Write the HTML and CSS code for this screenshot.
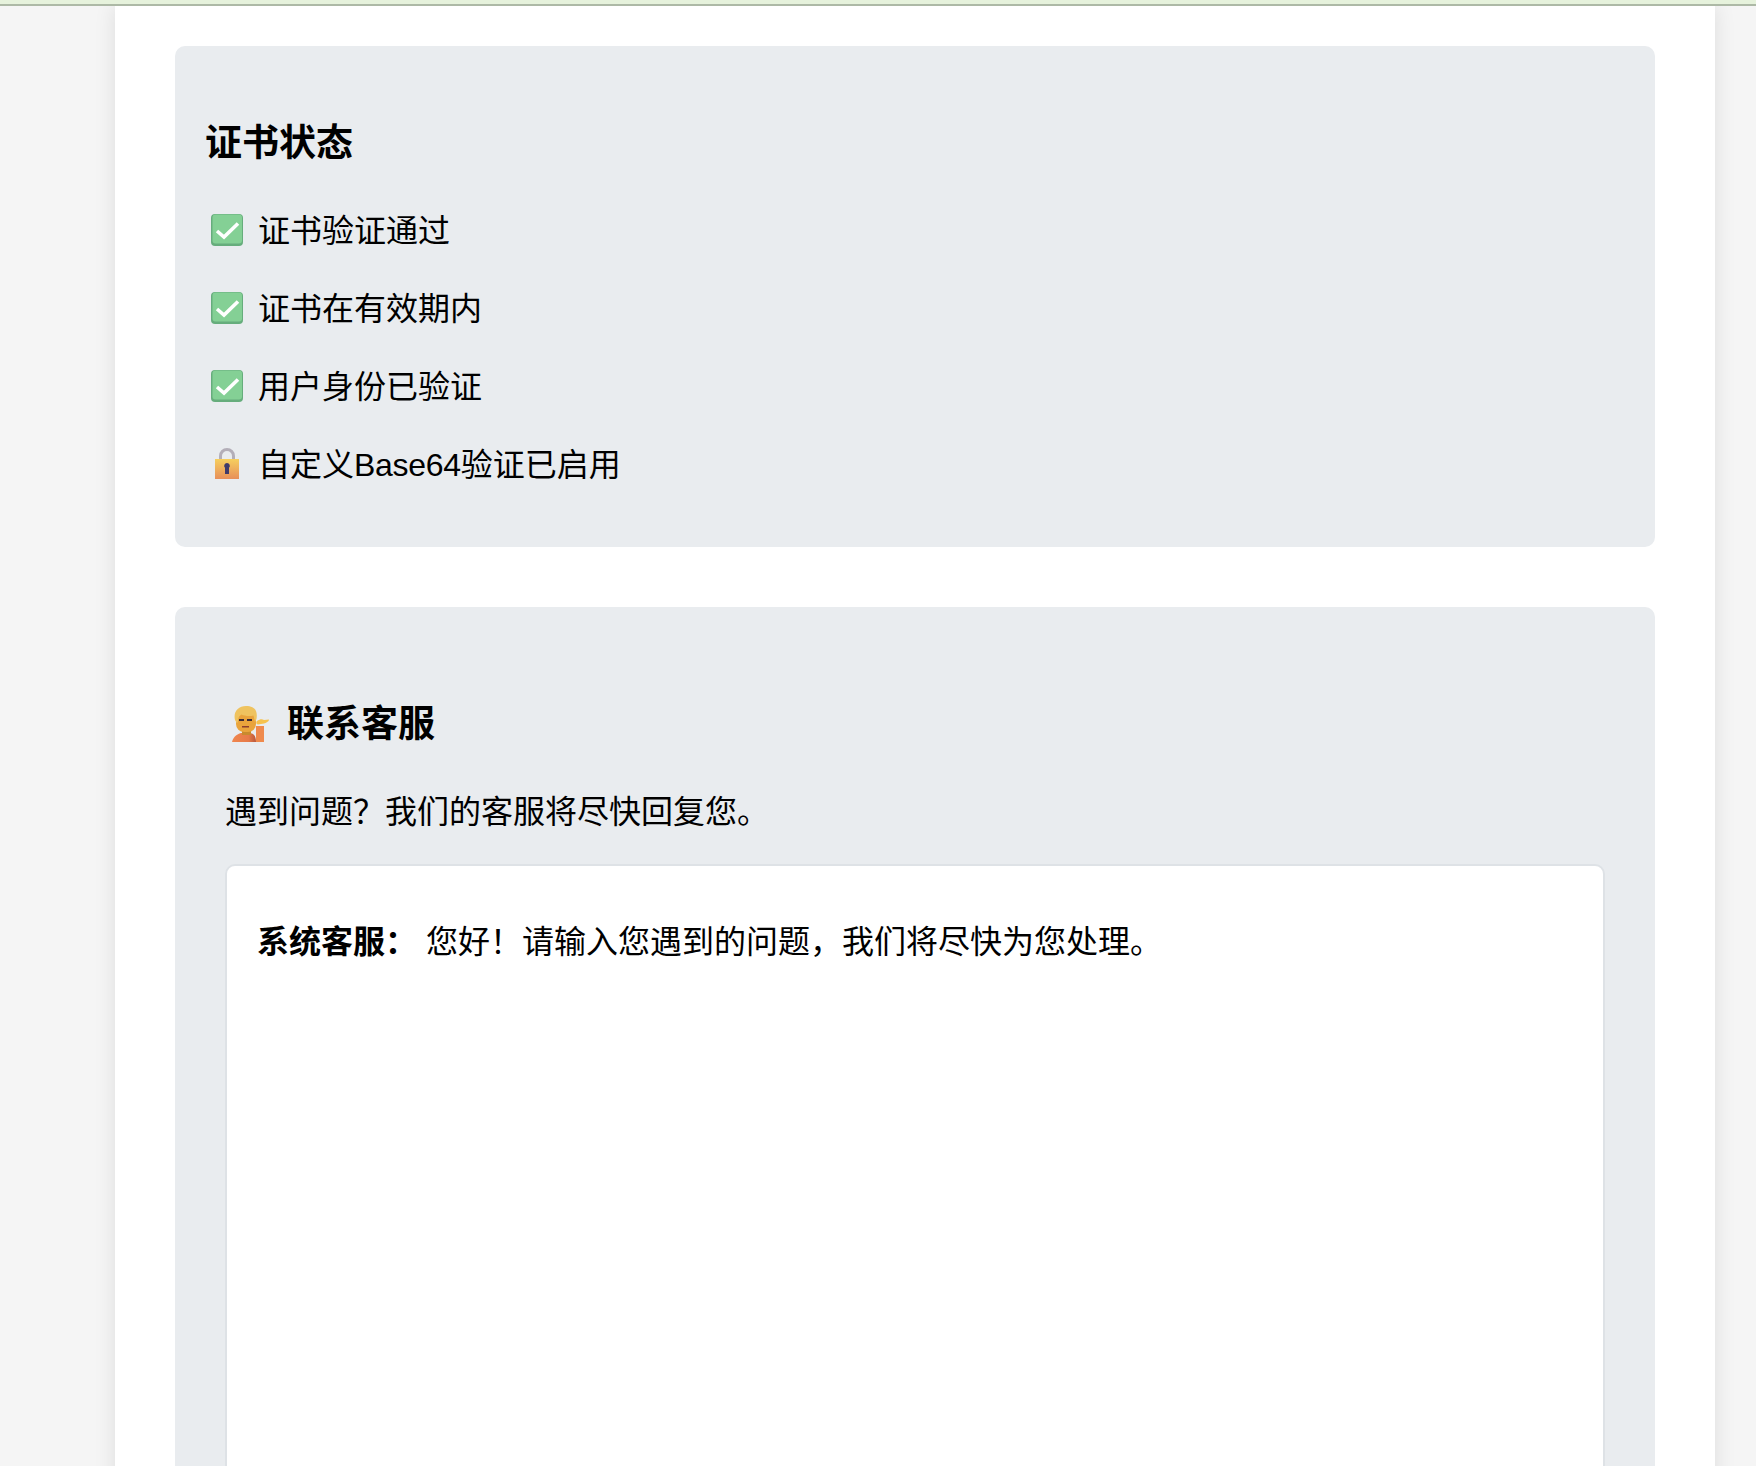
FILE: index.html
```
<!DOCTYPE html>
<html lang="zh-CN">
<head>
<meta charset="utf-8">
<title>证书状态</title>
<link rel="stylesheet" href="styles.css">
</head>
<body>
<div class="topbar"></div>
<main class="container">
  <section class="panel status">
    <h2 class="status-title">证书状态</h2>
    <ul class="status-list">
      <li class="status-item">
        <svg class="emoji" viewBox="0 0 32 32"><rect x="0" y="0" width="32" height="32" rx="4" fill="#66ad7c"/><rect x="1.5" y="0.5" width="29.5" height="29" rx="3" fill="#84d095"/><path d="M6 17l7 6L27 9.5" fill="none" stroke="#fff" stroke-width="3.6"/></svg>
        <span>证书验证通过</span>
      </li>
      <li class="status-item">
        <svg class="emoji" viewBox="0 0 32 32"><rect x="0" y="0" width="32" height="32" rx="4" fill="#66ad7c"/><rect x="1.5" y="0.5" width="29.5" height="29" rx="3" fill="#84d095"/><path d="M6 17l7 6L27 9.5" fill="none" stroke="#fff" stroke-width="3.6"/></svg>
        <span>证书在有效期内</span>
      </li>
      <li class="status-item">
        <svg class="emoji" viewBox="0 0 32 32"><rect x="0" y="0" width="32" height="32" rx="4" fill="#66ad7c"/><rect x="1.5" y="0.5" width="29.5" height="29" rx="3" fill="#84d095"/><path d="M6 17l7 6L27 9.5" fill="none" stroke="#fff" stroke-width="3.6"/></svg>
        <span>用户身份已验证</span>
      </li>
      <li class="status-item">
        <svg class="emoji" viewBox="0 0 32 32"><defs><linearGradient id="lockbody" x1="0" y1="0" x2="0" y2="1"><stop offset="0" stop-color="#f6cf5e"/><stop offset="1" stop-color="#e78f5a"/></linearGradient></defs><path d="M9.5 12V8a6.5 6.5 0 0 1 13 0V12" fill="none" stroke="#b3aeb8" stroke-width="3"/><rect x="4" y="11" width="24" height="20" fill="url(#lockbody)"/><path d="M16 15a2.8 2.8 0 0 1 2 4.8V26h-4v-6.2A2.8 2.8 0 0 1 16 15z" fill="#3f3a6a"/></svg>
        <span>自定义<span class="latin">Base64</span>验证已启用</span>
      </li>
    </ul>
  </section>
  <section class="panel contact">
    <h2 class="contact-title">
      <svg class="emoji-person" viewBox="0 0 38 38"><defs><linearGradient id="shirt" x1="0" y1="0" x2="1" y2="0"><stop offset="0" stop-color="#f0864e"/><stop offset="0.7" stop-color="#e67a48"/><stop offset="1" stop-color="#b9573a"/></linearGradient></defs><path d="M0 36c1-5 5-8 9-9h8c4 0 7 2 7 9z" fill="url(#shirt)"/><rect x="24" y="20" width="8" height="16" fill="#ef8a4d"/><path d="M25 15c3-2 5-2 7-1l5-.5c0 2-3 3.5-5 4l-6 1c-2 0-2-3-1-3.5z" fill="#f6c24e"/><rect x="10" y="23" width="9" height="6" fill="#c98a2e"/><rect x="4" y="5" width="20" height="21" rx="8" fill="#e9a43c"/><path d="M3 14C1 6 6 0 14 0c8 0 12 4 10.500 13l-1.500 3-1.500-6.500c-4 1-9 .5-12-1-2 1-3.500 3-3.500 6.500l-1 2.500z" fill="#efc35f"/><rect x="7" y="13" width="5" height="2" fill="#3a2a33"/><rect x="15" y="13" width="5" height="2" fill="#3a2a33"/><rect x="10" y="20" width="7" height="1.500" fill="#8a3f2c"/></svg>
      <span>联系客服</span>
    </h2>
    <p class="contact-lead">遇到问题？我们的客服将尽快回复您。</p>
    <div class="chat">
      <p class="chat-message"><strong class="chat-sender">系统客服：</strong><span>您好！请输入您遇到的问题，我们将尽快为您处理。</span></p>
    </div>
  </section>
</main>
</body>
</html>
```
FILE: styles.css
```
* { box-sizing: border-box; }
html, body { margin: 0; padding: 0; height: 1466px; overflow: hidden; }
body {
  background: #f5f5f5;
  color: #000;
  font-family: "Liberation Sans", "Noto Sans CJK SC", sans-serif;
  font-size: 32px;
}
.topbar {
  height: 6px;
  background: #e6f2dc;
  border-bottom: 2px solid #adb9a6;
  position: relative;
  z-index: 1;
}
.container {
  width: 1600px;
  margin: 0 0 0 115px;
  padding: 40px 60px 0;
  background: #fff;
  box-shadow: 0 0 20px rgba(0, 0, 0, 0.1);
  min-height: 1460px;
}
.panel {
  background: #e9ecef;
  border-radius: 10px;
}
.status {
  padding: 70px 30px 43px;
  margin-bottom: 60px;
  height: 501px;
}
.status-title {
  margin: 0 0 17px;
  font-size: 37px;
  line-height: 56px;
  font-weight: 700;
}
.status-list { list-style: none; margin: 0; padding: 0; }
.status-item {
  display: flex;
  align-items: center;
  gap: 15px;
  height: 78px;
  padding-left: 6px;
}
.latin { letter-spacing: -0.3px; }
.emoji { width: 32px; height: 32px; flex: none; margin-top: 4px; }
.contact {
  padding: 90px 50px 0;
  height: 900px;
}
.contact-title {
  display: flex;
  align-items: center;
  gap: 17px;
  margin: 0 0 32px;
  padding-left: 7px;
  font-size: 37px;
  line-height: 56px;
  font-weight: 700;
}
.emoji-person { width: 38px; height: 38px; flex: none; }
.contact-lead {
  margin: 0 0 25px;
  line-height: 54px;
}
.chat {
  background: #fff;
  border: 2px solid #dee2e6;
  border-radius: 10px;
  padding: 49px 30px;
  height: 800px;
}
.chat-message { margin: 0; line-height: 54px; }
.chat-sender { margin-right: 9px; }
```
